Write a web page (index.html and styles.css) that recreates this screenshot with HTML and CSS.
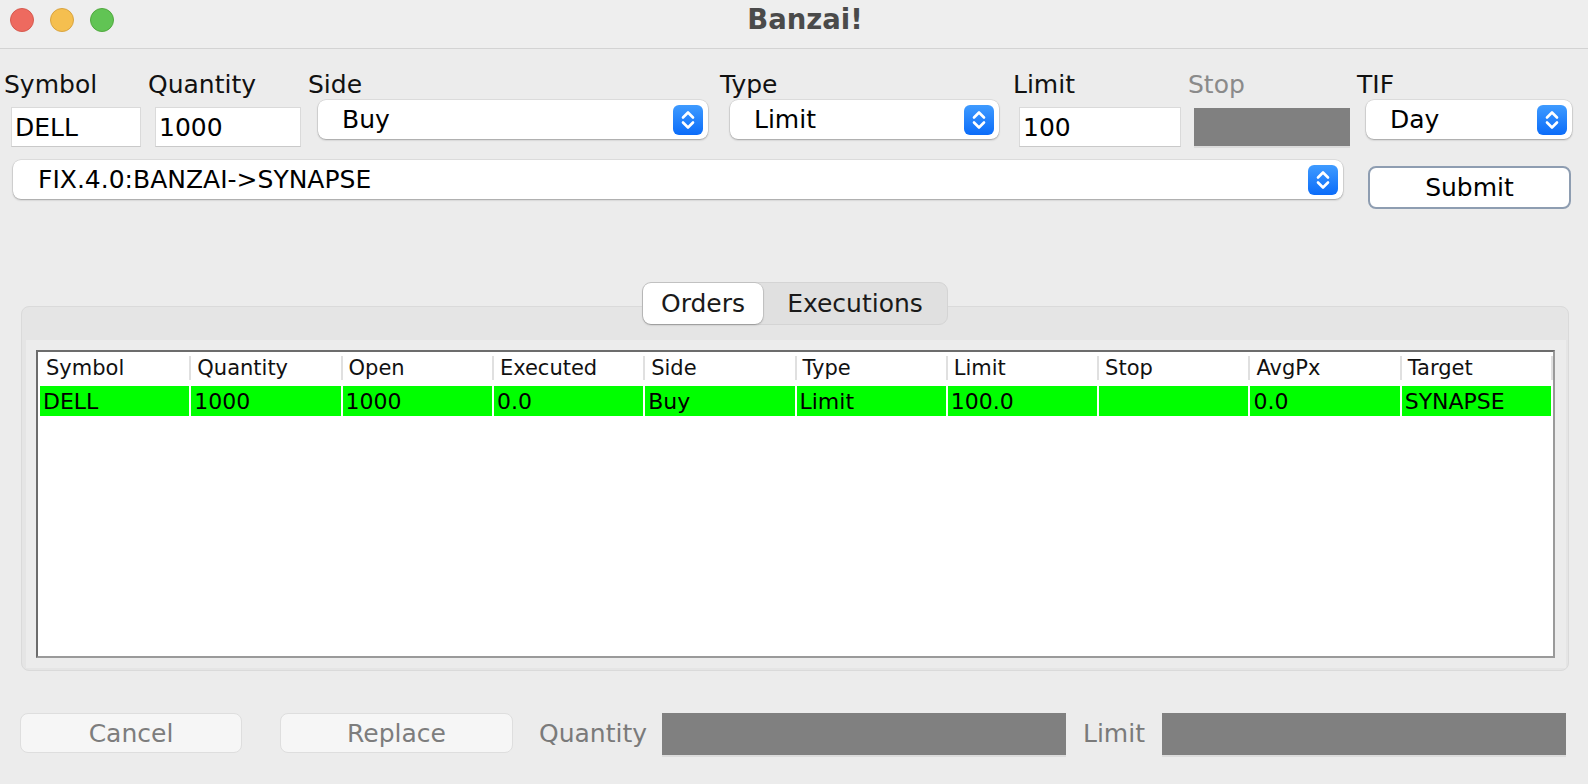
FILE: index.html
```html
<!DOCTYPE html>
<html lang="en">
<head>
    <meta charset="UTF-8">
    <meta name="viewport" content="width=device-width, initial-scale=1.0">
    <title>Banzai!</title>
    <link rel="stylesheet" href="styles.css">
</head>
<body>
    <div class="titlebar">
        <div class="lights">
            <span class="light red"></span>
            <span class="light yellow"></span>
            <span class="light green"></span>
        </div>
        <div class="title">Banzai!</div>
        <div></div>
    </div>

    <div class="order-row">
        <div class="group g-symbol">
            <label>Symbol</label>
            <div class="text-field">DELL</div>
        </div>
        <div class="group g-qty">
            <label>Quantity</label>
            <div class="text-field">1000</div>
        </div>
        <div class="group g-side">
            <label>Side</label>
            <div class="combo">Buy
                <svg class="stepper" viewBox="0 0 30 30"><use href="#step"/></svg>
            </div>
        </div>
        <div class="group g-type">
            <label>Type</label>
            <div class="combo">Limit
                <svg class="stepper" viewBox="0 0 30 30"><use href="#step"/></svg>
            </div>
        </div>
        <div class="group g-limit">
            <label>Limit</label>
            <div class="text-field">100</div>
        </div>
        <div class="group g-stop">
            <label class="disabled">Stop</label>
            <div class="gray-field"></div>
        </div>
        <div class="group g-tif">
            <label>TIF</label>
            <div class="combo">Day
                <svg class="stepper" viewBox="0 0 30 30"><use href="#step"/></svg>
            </div>
        </div>
    </div>

    <div class="session-row">
        <div class="combo session">FIX.4.0:BANZAI-&gt;SYNAPSE
            <svg class="stepper" viewBox="0 0 30 30"><use href="#step"/></svg>
        </div>
        <button class="submit">Submit</button>
    </div>

    <div class="tabs-wrap">
        <div class="tabs">
            <div class="tab selected">Orders</div>
            <div class="tab">Executions</div>
        </div>
    </div>

    <div class="panel">
        <div class="panel-inner">
            <div class="table">
                <div class="trow head">
                    <div class="cell">Symbol</div>
                    <div class="cell">Quantity</div>
                    <div class="cell">Open</div>
                    <div class="cell">Executed</div>
                    <div class="cell">Side</div>
                    <div class="cell">Type</div>
                    <div class="cell">Limit</div>
                    <div class="cell">Stop</div>
                    <div class="cell">AvgPx</div>
                    <div class="cell">Target</div>
                </div>
                <div class="trow data">
                    <div class="cell">DELL</div>
                    <div class="cell">1000</div>
                    <div class="cell">1000</div>
                    <div class="cell">0.0</div>
                    <div class="cell">Buy</div>
                    <div class="cell">Limit</div>
                    <div class="cell">100.0</div>
                    <div class="cell"></div>
                    <div class="cell">0.0</div>
                    <div class="cell">SYNAPSE</div>
                </div>
            </div>
        </div>
    </div>

    <div class="action-row">
        <button class="plain btn-cancel">Cancel</button>
        <button class="plain btn-replace">Replace</button>
        <span class="bottom-label lbl-qty">Quantity</span>
        <div class="gray-field wide"></div>
        <span class="bottom-label lbl-limit">Limit</span>
        <div class="gray-field wide"></div>
    </div>

    <svg width="0" height="0" class="defs">
        <defs>
            <linearGradient id="blue" x1="0" y1="0" x2="0" y2="1">
                <stop offset="0" stop-color="#3f9bff"/>
                <stop offset="1" stop-color="#0b6cf9"/>
            </linearGradient>
            <g id="step">
                <rect x="0" y="0" width="30" height="30" rx="6" fill="url(#blue)"/>
                <path d="M10 12.5 L15 7.5 L20 12.5 M10 17.5 L15 22.5 L20 17.5" fill="none" stroke="#fff" stroke-width="2.6" stroke-linecap="round" stroke-linejoin="round"/>
            </g>
        </defs>
    </svg>
</body>
</html>
```

FILE: styles.css
```css
body {
    margin: 0;
    width: 1588px;
    height: 784px;
    overflow: hidden;
    background-color: #ececec;
    font-family: "DejaVu Sans", Verdana, sans-serif;
    font-size: 25px;
    color: #111;
}

.defs {
    position: absolute;
}

/* window title bar */
.titlebar {
    height: 48px;
    border-bottom: 1px solid #d3d3d3;
    background-color: #eeeeee;
    display: grid;
    grid-template-columns: 1fr auto 1fr;
}

.lights {
    display: flex;
    gap: 16px;
    padding: 8px 0 0 10px;
}

.light {
    width: 22px;
    height: 22px;
    border-radius: 50%;
    border: 1px solid;
}

.red { background-color: #ee6a5f; border-color: #d65a4f; }
.yellow { background-color: #f5bf4f; border-color: #d9a440; }
.green { background-color: #61c454; border-color: #51a93f; }

.title {
    font-weight: bold;
    font-size: 27.5px;
    line-height: 30px;
    padding: 4px 0 0 22px;
    color: #4a4a4a;
}

/* order entry */
.order-row {
    display: flex;
    align-items: flex-start;
    padding: 21px 0 0 4px;
}

.group {
    display: flex;
    flex-direction: column;
    align-items: flex-start;
}

.group label {
    height: 30px;
    line-height: 30px;
}

.group label.disabled {
    color: #8a8a8a;
}

.g-symbol { width: 144px; }
.g-qty { width: 160px; }
.g-side { width: 412px; }
.g-type { width: 293px; }
.g-limit { width: 175px; }
.g-stop { width: 169px; }

.g-symbol .text-field { margin-left: 7px; width: 130px; }
.g-qty .text-field { margin-left: 7px; width: 146px; }
.g-side .combo { margin-left: 10px; width: 390px; }
.g-type .combo { margin-left: 10px; width: 269px; }
.g-limit .text-field { margin-left: 6px; width: 162px; }
.g-stop .gray-field { margin-left: 6px; width: 156px; height: 38px; margin-top: 8px; }
.g-tif .combo { margin-left: 9px; width: 206px; }

.text-field {
    box-sizing: border-box;
    height: 40px;
    margin-top: 7px;
    background-color: #fff;
    border: 1px solid #dadada;
    border-bottom-color: #c9c9c9;
    padding-left: 3px;
    line-height: 40px;
    color: #000;
}

.gray-field {
    background-color: #808080;
    box-shadow: 0 2px 0 #dcdcdc;
}

.combo {
    box-sizing: border-box;
    height: 39px;
    display: flex;
    align-items: center;
    padding: 0 5px 0 24px;
    background-color: #fff;
    border-radius: 8px;
    box-shadow: 0 0 0 0.5px rgba(0, 0, 0, 0.12), 0 1px 2px rgba(0, 0, 0, 0.28);
    color: #000;
}

.stepper {
    width: 30px;
    height: 30px;
    margin-left: auto;
}

.session-row {
    display: flex;
    align-items: flex-start;
    margin-top: 13px;
    padding-left: 13px;
}

.combo.session {
    width: 1330px;
    padding-left: 25px;
}

.submit {
    margin: 6px 0 0 25px;
    width: 203px;
    height: 43px;
    background-color: #fff;
    border: 2px solid #8e9db1;
    border-radius: 8px;
    font-family: inherit;
    font-size: 25px;
    color: #000;
    padding: 0;
}

/* tabbed pane */
.tabs-wrap {
    display: flex;
    justify-content: center;
    margin: 73px 19px -19px 21px;
    position: relative;
    z-index: 1;
}

.tabs {
    display: flex;
    height: 43px;
    box-sizing: border-box;
    background-color: #e0e0e0;
    border: 1px solid #d4d4d4;
    border-radius: 9px;
}

.tab {
    height: 41px;
    line-height: 41px;
    text-align: center;
    width: 184px;
    color: #1a1a1a;
}

.tab.selected {
    width: 120px;
    background-color: #fff;
    border-radius: 8px;
    box-shadow: 0 0 0 0.5px rgba(0, 0, 0, 0.15), 0 1px 2px rgba(0, 0, 0, 0.25);
}

.panel {
    margin: 0 19px 0 21px;
    background-color: #e5e5e5;
    border: 1px solid #dadada;
    border-radius: 8px;
    padding: 33px 2px 2px 4px;
}

.panel-inner {
    background-color: #ececec;
    padding: 10px 0 10px 10px;
}

.table {
    box-sizing: border-box;
    width: 1519px;
    height: 308px;
    background-color: #fff;
    border: 2px solid #9a9a9a;
    border-top-color: #6c6c6c;
    border-left-color: #6c6c6c;
}

.trow {
    display: grid;
    grid-template-columns: repeat(10, 1fr);
    column-gap: 2px;
    padding: 0 2px;
}

.head .cell {
    position: relative;
    height: 32px;
    line-height: 32px;
    padding-left: 6px;
    font-size: 21px;
    color: #111;
}

.head .cell::after {
    content: "";
    position: absolute;
    right: -2px;
    top: 4px;
    bottom: 4px;
    width: 2px;
    background-color: #e0e0e0;
}

.data {
    margin-top: 2px;
}

.data .cell {
    height: 30px;
    line-height: 30px;
    padding: 1px 0 0 3px;
    box-sizing: border-box;
    background-color: #00ff00;
    font-size: 22px;
    color: #000;
}

/* bottom actions */
.action-row {
    display: flex;
    align-items: flex-start;
    margin-top: 42px;
    padding-left: 20px;
}

.plain {
    height: 40px;
    padding: 0;
    background-color: #f6f6f6;
    border: 1px solid #dedede;
    border-radius: 8px;
    font-family: inherit;
    font-size: 25px;
    color: #7d7d7d;
}

.btn-cancel { width: 222px; }
.btn-replace { width: 233px; margin-left: 38px; }

.bottom-label {
    line-height: 42px;
    color: #7a7a7a;
}

.lbl-qty { width: 123px; margin-left: 26px; }
.lbl-limit { width: 79px; margin-left: 17px; }

.gray-field.wide {
    width: 404px;
    height: 42px;
}
```
